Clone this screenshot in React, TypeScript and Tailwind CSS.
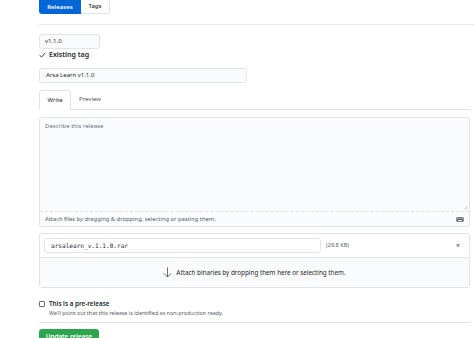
import React from "react";

export default function App() {
  return (
    <div className="w-[474px] h-[338px] overflow-hidden bg-white text-[#24292e] font-['Noto_Sans',sans-serif]">
      <div className="pl-[39px]">
        {/* Releases / Tags */}
        <div className="flex h-[14px]">
          <div className="w-[42px] bg-[#0366d6] text-white text-[6px] font-semibold flex items-center justify-center rounded-bl-[3px]">
            Releases
          </div>
          <div className="w-[29px] border border-l-0 border-t-0 border-[#e1e4e8] rounded-br-[3px] text-[6px] font-medium flex items-center justify-center">
            Tags
          </div>
        </div>
      </div>
      <div className="mt-[10px] ml-[39px] h-px bg-[#e8eaed]" />
      <div className="pl-[39px] pr-[4px]">
        {/* Tag input */}
        <div className="mt-[9px] w-[61px] h-[15px] border border-[#e1e4e8] rounded-[3px] bg-[#fafbfc] flex items-center px-[5px] text-[6px]">
          v1.1.0
        </div>
        <div className="mt-px h-[10px] flex items-center gap-[3px] text-[7px] font-semibold">
          <svg width="7" height="6" viewBox="0 0 7 6" className="shrink-0">
            <path d="M0.6 3.2 L2.5 5 L6.4 0.8" fill="none" stroke="#24292e" strokeWidth="0.9" />
          </svg>
          <span>Existing tag</span>
        </div>
        {/* Title */}
        <div className="mt-[8px] w-[208px] h-[15px] border border-[#e1e4e8] rounded-[3px] bg-[#fafbfc] flex items-center px-[6px] text-[6px]">
          Arsa Learn v1.1.0
        </div>
        {/* Write / Preview tabs */}
        <div className="mt-[7px] h-[20px] flex items-end border-b border-[#e1e4e8]">
          <div className="w-[32px] h-[20px] -mb-px bg-white border border-b-0 border-[#e1e4e8] rounded-t-[3px] flex items-center justify-center text-[6px]">
            Write
          </div>
          <div className="w-[38px] h-[20px] flex items-center justify-center text-[6px] text-[#586069]">
            Preview
          </div>
        </div>
        {/* Textarea */}
        <div className="mt-[7px] h-[110px] border border-[#e1e4e8] rounded-[3px] bg-[#fafbfc] flex flex-col">
          <div className="relative flex-1 px-[5px] pt-[4px] text-[6px] text-[#6a737d]">
            Describe this release
            <svg width="5" height="5" viewBox="0 0 5 5" className="absolute right-[1px] bottom-[1px]">
              <path d="M1 4.6 L4.6 1 M3 4.6 L4.6 3" stroke="#959da5" strokeWidth="0.5" />
            </svg>
          </div>
          <div className="h-[15px] border-t border-dashed border-[#e1e4e8] flex items-center justify-between px-[5px] text-[5.8px] text-[#586069]">
            <span>Attach files by dragging &amp; dropping, selecting or pasting them.</span>
            <svg width="8" height="5" viewBox="0 0 8 5">
              <rect x="0.3" y="0.3" width="7.4" height="4.4" rx="0.6" fill="#586069" />
              <rect x="1.3" y="1.2" width="1" height="0.9" fill="#fff" />
              <rect x="3.5" y="1.2" width="1" height="0.9" fill="#fff" />
              <rect x="5.7" y="1.2" width="1" height="0.9" fill="#fff" />
              <rect x="2" y="3" width="4" height="0.8" fill="#fff" />
            </svg>
          </div>
        </div>
        {/* Attached file */}
        <div className="mt-[6px] h-[55px] border border-[#e1e4e8] rounded-[3px] flex flex-col">
          <div className="h-[24px] flex items-center pl-[4px] pr-[9px] border-b border-[#e1e4e8]">
            <div className="w-[277px] h-[15px] border border-[#e1e4e8] rounded-[3px] bg-white flex items-center px-[6px] font-['DejaVu_Sans_Mono',monospace] text-[6.1px]">
              arsalearn_v.1.1.0.rar
            </div>
            <span className="ml-[5px] text-[5.6px] text-[#586069]">(29.8 KB)</span>
            <span className="ml-auto text-[7.5px] leading-none text-[#444d56]">×</span>
          </div>
          <div className="flex-1 bg-[#fafbfc] flex items-center justify-center gap-[4px] text-[6.3px] text-[#24292e]">
            <svg width="9" height="11" viewBox="0 0 9 11">
              <path d="M4.5 0.5 V10 M0.8 6.3 L4.5 10 L8.2 6.3" fill="none" stroke="#444d56" strokeWidth="0.8" />
            </svg>
            <span>Attach binaries by dropping them here or selecting them.</span>
          </div>
        </div>
        {/* Pre-release */}
        <div className="mt-[11px] h-[10px] flex items-center gap-[4px]">
          <div className="w-[6px] h-[6px] border border-[#6a737d] rounded-[1px] bg-white" />
          <span className="text-[6.3px] font-semibold">This is a pre-release</span>
        </div>
        <div className="pl-[10px] text-[5.4px] text-[#586069] leading-[8px]">
          We&apos;ll point out that this release is identified as non-production ready.
        </div>
        <div className="mt-[5px] h-px bg-[#e1e4e8]" />
        <div className="mt-[6px] w-[60px] h-[16px] bg-[#2ea44f] rounded-[3px] text-white text-[6.3px] font-semibold flex items-center justify-center">
          Update release
        </div>
      </div>
    </div>
  );
}
